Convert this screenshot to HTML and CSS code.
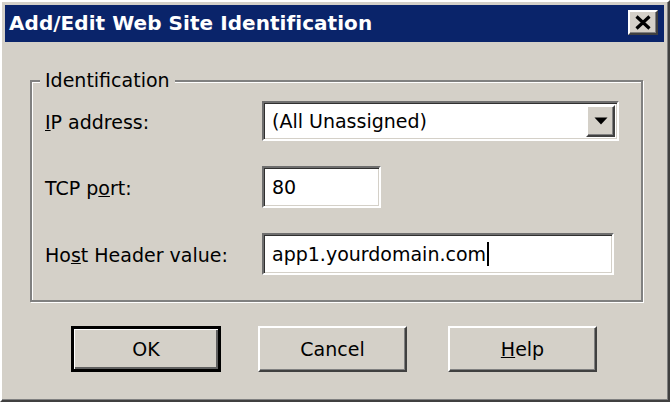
FILE: index.html
```html
<!DOCTYPE html>
<html>
<head>
<meta charset="utf-8">
<link rel="stylesheet" href="styles.css">
</head>
<body>
<div class="window">
  <div class="titlebar">
    <span class="title">Add/Edit Web Site Identification</span>
    <button class="close" aria-label="Close">
      <svg width="18" height="15" viewBox="0 0 18 15"><path d="M2.5 1.5 L15.5 13.5 M15.5 1.5 L2.5 13.5" stroke="#000" stroke-width="3.2" fill="none"/></svg>
    </button>
  </div>
  <div class="content">
    <fieldset class="group">
      <legend>Identification</legend>
      <div class="form">
        <label class="lbl"><u>I</u>P address:</label>
        <div class="combo">
          <span class="value">(All Unassigned)</span>
          <span class="drop"><svg width="14" height="8" viewBox="0 0 14 8"><path d="M0.5 0.5 H13.5 L7 7.5 Z" fill="#000"/></svg></span>
        </div>
        <label class="lbl">TCP p<u>o</u>rt:</label>
        <div class="field port"><span class="value">80</span></div>
        <label class="lbl">Ho<u>s</u>t Header value:</label>
        <div class="field host"><span class="value">app1.yourdomain.com</span><span class="caret"></span></div>
      </div>
    </fieldset>
    <div class="buttons">
      <button class="btn default">OK</button>
      <button class="btn cancel">Cancel</button>
      <button class="btn help"><u>H</u>elp</button>
    </div>
  </div>
</div>
</body>
</html>
```

FILE: styles.css
```css
html, body {
  margin: 0;
  padding: 0;
  background: #d4d0c8;
}
.window {
  box-sizing: border-box;
  width: 670px;
  height: 402px;
  background: #d4d0c8;
  border-style: solid;
  border-width: 2px;
  border-color: #ffffff #404040 #404040 #ffffff;
  box-shadow: inset -1px -1px 0 #808080;
  padding: 3px 4px 0 3px;
  font-family: "DejaVu Sans", Verdana, sans-serif;
  font-size: 19px;
  color: #000;
  overflow: hidden;
}
.titlebar {
  height: 37px;
  background: #0a246a;
  display: flex;
  align-items: center;
  justify-content: space-between;
  padding: 0 6px 0 4px;
}
.title {
  color: #fff;
  font-weight: bold;
  font-size: 20px;
  line-height: 24px;
  margin-top: -1px;
  letter-spacing: 0.05px;
}
.close {
  box-sizing: border-box;
  width: 30px;
  height: 25px;
  margin-top: -2px;
  padding: 0;
  background: #d4d0c8;
  border: 2px solid;
  border-color: #ffffff #404040 #404040 #ffffff;
  box-shadow: inset -1px -1px 0 #808080;
  display: flex;
  align-items: center;
  justify-content: center;
}
.close svg { display: block; }
.content {
  display: flex;
  flex-direction: column;
}
.group {
  margin: 27px 21px 0 25px;
  padding: 9px 14px 25px 13px;
  min-width: 0;
  border: 2px solid #808080;
  box-shadow: 1px 1px 0 #ffffff, inset 1px 1px 0 #ffffff;
}
.group legend {
  padding: 0 5px;
  margin-left: -5px;
  line-height: 23px;
  background: #d4d0c8;
}
.form {
  display: grid;
  grid-template-columns: 217px auto;
  grid-template-rows: 40px 42px 42px;
  row-gap: 25px;
  align-items: center;
  justify-items: start;
}
.lbl {
  line-height: 22px;
  padding-top: 2px;
}
.combo, .field {
  box-sizing: border-box;
  height: 100%;
  background: #fff;
  border: 2px solid;
  border-color: #6e6e6e #ffffff #ffffff #6e6e6e;
  box-shadow: inset 1px 1px 0 #303030, inset -1px -1px 0 #d4d0c8;
  display: flex;
  align-items: center;
  padding: 2px 2px 2px 8px;
}
.combo { width: 357px; }
.port { width: 119px; }
.host { width: 352px; }
.value {
  line-height: 22px;
  white-space: nowrap;
}
.combo .value { flex: 1; }
.drop {
  box-sizing: border-box;
  width: 29px;
  height: 100%;
  background: #d4d0c8;
  border: 2px solid;
  border-color: #ffffff #404040 #404040 #ffffff;
  box-shadow: inset -1px -1px 0 #808080;
  display: flex;
  align-items: center;
  justify-content: center;
}
.drop svg { display: block; }
.caret {
  width: 2px;
  height: 24px;
  background: #000;
  margin-left: 1px;
}
.buttons {
  display: flex;
  margin-top: 24px;
  padding-left: 66px;
}
.btn {
  box-sizing: border-box;
  width: 149px;
  height: 46px;
  padding: 0;
  font-family: "DejaVu Sans", Verdana, sans-serif;
  font-size: 19px;
  color: #000;
  background: #d4d0c8;
  border: 2px solid;
  border-color: #ffffff #404040 #404040 #ffffff;
  box-shadow: inset -1px -1px 0 #808080;
}
.btn.default {
  width: 150px;
  border: 3px solid #000;
  box-shadow: inset 1px 1px 0 #ffffff, inset -2px -2px 0 #606060;
}
.cancel { margin-left: 37px; }
.help { margin-left: 41px; }
```
